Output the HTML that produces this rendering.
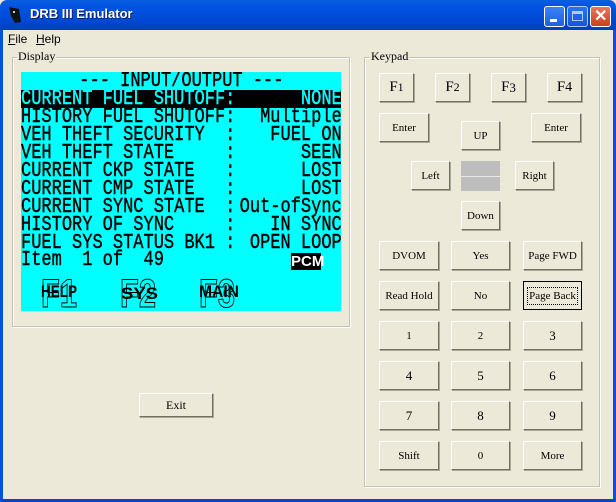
<!DOCTYPE html>
<html><head><style>
*{margin:0;padding:0;box-sizing:border-box}
body{width:616px;height:502px;overflow:hidden;background:#ece9d8;font-family:"Liberation Serif",serif;position:relative}
.abs{position:absolute}
#tb{left:0;top:0;width:616px;height:30px;background:linear-gradient(#0a5fe0,#0054e3 20%,#0049d4 70%,#0040b8);border-radius:7px 7px 0 0}
#tb .t{left:30px;top:6px;color:#fff;font:bold 13px "Liberation Sans",sans-serif;text-shadow:1px 1px #0a1f6a}
.wb{top:6px;width:21px;height:21px;border:1px solid #fff;border-radius:3px;background:linear-gradient(#3c82f5,#1f5fe0)}
#frame{left:0;top:30px;width:616px;height:472px;border-left:3px solid #0851e0;border-right:3px solid #0851e0;border-bottom:3px solid #0843c8}
.menu{top:32px;font:12px "Liberation Sans",sans-serif;color:#000}
.gb{border:1px solid #c5c2b2;box-shadow:1px 1px 0 #fff inset,1px 1px 0 #fff}
.gl{background:#ece9d8;font-size:12px;padding:0 1px;color:#000}
#lcd{left:21px;top:72px;width:320px;height:239px;background:#00ffff;font-family:"Liberation Mono",monospace;font-size:21px;color:#000;overflow:hidden}
.r{position:absolute;left:0;width:397px;height:18px;line-height:19px;white-space:pre;transform:scaleX(0.81);transform-origin:0 0;display:flex;justify-content:space-between;padding-right:1px;-webkit-text-stroke:0.4px currentColor}
.hl{left:0;width:320px;height:18px;background:#000}
.b{border:1px solid;border-color:#fff #716f64 #716f64 #fff;box-shadow:1px 1px 0 #aca899;background:#ece9d8;font-size:11px;display:flex;align-items:center;justify-content:center;color:#000}
</style></head><body>
<div id="tb" class="abs">
<svg class="abs" style="left:7px;top:6px" width="16" height="18"><path d="M2 1 L12 3 L14 16 L8 17 L4 10 Z" fill="#111"/><rect x="6" y="5" width="2" height="2" fill="#ccc"/></svg>
<div class="t abs">DRB III Emulator</div>
<div class="wb abs" style="left:544px"><div class="abs" style="left:5px;top:12px;width:7px;height:3px;background:#fff"></div></div>
<div class="wb abs" style="left:567px;opacity:.7"><div class="abs" style="left:4px;top:4px;width:11px;height:10px;border:1px solid #fff;border-top:3px solid #fff"></div></div>
<div class="wb abs" style="left:590px;background:linear-gradient(#e8775a,#c8421c)"><div class="abs" style="left:3px;top:-1px;color:#fff;font:bold 16px 'Liberation Sans',sans-serif">✕</div></div>
</div>
<div id="frame" class="abs"></div>
<div class="menu abs" style="left:8px"><u>F</u>ile</div>
<div class="menu abs" style="left:36px"><u>H</u>elp</div>

<div class="gb abs" style="left:12px;top:57px;width:338px;height:270px"></div>
<div class="gl abs" style="left:17px;top:49px">Display</div>
<div class="gb abs" style="left:364px;top:57px;width:236px;height:430px"></div>
<div class="gl abs" style="left:370px;top:49px">Keypad</div>

<div id="lcd" class="abs">
<div class="r" style="top:0;justify-content:center"><span>--- INPUT/OUTPUT ---</span></div>
<div class="hl abs" style="top:18px"></div>
<div class="r" style="top:18px;color:#00ffff"><span>CURRENT FUEL SHUTOFF:</span><span>NONE</span></div>
<div class="r" style="top:36px"><span>HISTORY FUEL SHUTOFF:</span><span>Multiple</span></div>
<div class="r" style="top:54px"><span>VEH THEFT SECURITY  :</span><span>FUEL ON</span></div>
<div class="r" style="top:72px"><span>VEH THEFT STATE     :</span><span>SEEN</span></div>
<div class="r" style="top:90px"><span>CURRENT CKP STATE   :</span><span>LOST</span></div>
<div class="r" style="top:108px"><span>CURRENT CMP STATE   :</span><span>LOST</span></div>
<div class="r" style="top:126px"><span>CURRENT SYNC STATE  :</span><span>Out-ofSync</span></div>
<div class="r" style="top:144px"><span>HISTORY OF SYNC     :</span><span>IN SYNC</span></div>
<div class="r" style="top:162px"><span>FUEL SYS STATUS BK1 :</span><span>OPEN LOOP</span></div>
<div class="r" style="top:179px"><span>Item  1 of  49</span></div>
<div class="abs" style="left:270px;top:181px;height:17px;width:30px;background:#000;color:#fff;font:bold 15px 'Liberation Sans',sans-serif;line-height:17px;text-align:center">PCM</div>
<svg class="abs" style="left:0;top:195px" width="320" height="44">
<g font-family="Liberation Sans,sans-serif" font-size="40" font-weight="bold" fill="none" stroke="#000" stroke-width="1">
<text x="20" y="40" textLength="36" lengthAdjust="spacingAndGlyphs">F1</text>
<text x="99" y="40" textLength="36" lengthAdjust="spacingAndGlyphs">F2</text>
<text x="178" y="40" textLength="36" lengthAdjust="spacingAndGlyphs">F3</text>
</g>
<g font-family="Liberation Sans,sans-serif" font-size="17" font-weight="bold" fill="#000">
<text x="20" y="30" textLength="36" lengthAdjust="spacingAndGlyphs">HELP</text>
<text x="100" y="32" textLength="37" lengthAdjust="spacingAndGlyphs">SYS</text>
<text x="178" y="30" textLength="40" lengthAdjust="spacingAndGlyphs">MAIN</text>
</g></svg>
</div>

<div class="b abs" style="left:139px;top:393px;width:74px;height:24px;font-size:12px">Exit</div>

<div class="b abs" style="left:379px;top:73px;width:35px;height:29px;font-size:15px">F<span style="font-size:12px">1</span></div>
<div class="b abs" style="left:435px;top:73px;width:35px;height:29px;font-size:15px">F<span style="font-size:12px">2</span></div>
<div class="b abs" style="left:491px;top:73px;width:35px;height:29px;font-size:15px">F<span style="font-size:13px">3</span></div>
<div class="b abs" style="left:547px;top:73px;width:35px;height:29px;font-size:15px">F<span style="font-size:14px">4</span></div>
<div class="b abs" style="left:379px;top:113px;width:50px;height:29px">Enter</div>
<div class="b abs" style="left:461px;top:121px;width:39px;height:29px">UP</div>
<div class="b abs" style="left:531px;top:113px;width:50px;height:29px">Enter</div>
<div class="b abs" style="left:411px;top:161px;width:39px;height:29px">Left</div>
<div class="abs" style="left:461px;top:161px;width:39px;height:30px;background:#bdbdbd;border-top:15px solid #bdbdbd"><div style="height:1px;background:#e8e8e8"></div></div>
<div class="b abs" style="left:515px;top:161px;width:39px;height:29px">Right</div>
<div class="b abs" style="left:461px;top:201px;width:39px;height:29px">Down</div>

<div class="b abs" style="left:379px;top:241px;width:60px;height:29px">DVOM</div>
<div class="b abs" style="left:451px;top:241px;width:59px;height:29px">Yes</div>
<div class="b abs" style="left:523px;top:241px;width:59px;height:29px">Page FWD</div>
<div class="b abs" style="left:379px;top:281px;width:60px;height:29px">Read Hold</div>
<div class="b abs" style="left:451px;top:281px;width:59px;height:29px">No</div>
<div class="abs" style="left:523px;top:281px;width:59px;height:29px;border:1px solid #000;background:#ece9d8;font-size:11px;display:flex;align-items:center;justify-content:center"><span style="border:1px dotted #000;padding:2px 1px">Page Back</span></div>

<div class="b abs" style="left:379px;top:321px;width:60px;height:29px">1</div>
<div class="b abs" style="left:451px;top:321px;width:59px;height:29px">2</div>
<div class="b abs" style="left:523px;top:321px;width:59px;height:29px;font-size:13px">3</div>
<div class="b abs" style="left:379px;top:361px;width:60px;height:29px;font-size:13px">4</div>
<div class="b abs" style="left:451px;top:361px;width:59px;height:29px;font-size:13px">5</div>
<div class="b abs" style="left:523px;top:361px;width:59px;height:29px;font-size:13px">6</div>
<div class="b abs" style="left:379px;top:401px;width:60px;height:29px;font-size:13px">7</div>
<div class="b abs" style="left:451px;top:401px;width:59px;height:29px;font-size:13px">8</div>
<div class="b abs" style="left:523px;top:401px;width:59px;height:29px;font-size:13px">9</div>
<div class="b abs" style="left:379px;top:441px;width:60px;height:29px">Shift</div>
<div class="b abs" style="left:451px;top:441px;width:59px;height:29px">0</div>
<div class="b abs" style="left:523px;top:441px;width:59px;height:29px">More</div>
</body></html>
